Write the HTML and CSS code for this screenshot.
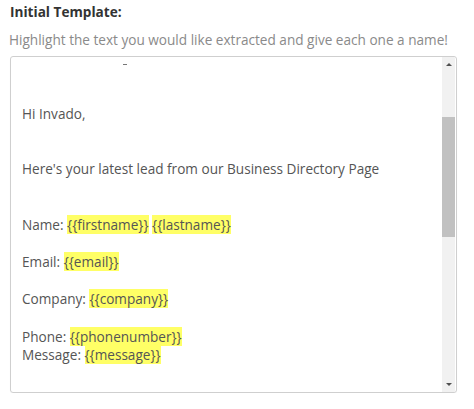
FILE: index.html
```html
<!DOCTYPE html>
<html>
<head>
<meta charset="utf-8">
<link rel="stylesheet" href="styles.css">
</head>
<body>
<div class="page">
  <h3 class="title">Initial Template:</h3>
  <p class="hint">Highlight the text you would like extracted and give each one a name!</p>
  <div class="box">
    <div class="content">
      <div class="top-gap"><span class="dash"></span></div>
      <div class="line">Hi Invado,</div>
      <div class="line"></div>
      <div class="line"></div>
      <div class="line">Here's your latest lead from our Business Directory Page</div>
      <div class="line"></div>
      <div class="line"></div>
      <div class="line">Name: <span class="hl">{{firstname}}</span> <span class="hl">{{lastname}}</span></div>
      <div class="line"></div>
      <div class="line">Email: <span class="hl">{{email}}</span></div>
      <div class="line"></div>
      <div class="line">Company: <span class="hl">{{company}}</span></div>
      <div class="line"></div>
      <div class="line">Phone: <span class="hl">{{phonenumber}}</span></div>
      <div class="line">Message: <span class="hl">{{message}}</span></div>
    </div>
    <div class="scrollbar">
      <div class="arrow up"></div>
      <div class="track"><div class="thumb"></div></div>
      <div class="arrow down"></div>
    </div>
  </div>
</div>
</body>
</html>
```
FILE: styles.css
```css
html, body {
  margin: 0;
  padding: 0;
  background: #ffffff;
}
body {
  font-family: "Open Sans", "Liberation Sans", sans-serif;
  font-size: 13.6px;
}
.page {
  padding: 2px 0 0 10px;
}
.title {
  margin: 0;
  font-size: 13.6px;
  font-weight: 700;
  line-height: 19px;
  color: #333333;
}
.hint {
  margin: 9px 0 7px -1px;
  font-size: 13.6px;
  line-height: 19px;
  color: #8a8a8a;
  white-space: nowrap;
}
.box {
  width: 445px;
  height: 335px;
  border: 1px solid #cfcfcf;
  border-radius: 3px;
  display: flex;
  overflow: hidden;
  box-shadow: 0 1px 1px rgba(0,0,0,0.04);
}
.content {
  flex: 1;
  padding-left: 11px;
  color: #555555;
  overflow: hidden;
}
.top-gap {
  height: 47.5px;
  padding-top: 7px;
  box-sizing: border-box;
}
.dash {
  display: block;
  width: 4px;
  height: 1px;
  background: #777777;
  margin-left: 101px;
}
.line {
  height: 18.6px;
  line-height: 18.6px;
  white-space: nowrap;
}
.hl {
  background: #ffff66;
}
.scrollbar {
  width: 13px;
  background: #f1f1f1;
  display: flex;
  flex-direction: column;
  margin-right: 1px;
}
.arrow {
  height: 15px;
  display: flex;
  align-items: center;
  justify-content: center;
}
.arrow::before {
  content: "";
  width: 0;
  height: 0;
  border-left: 3px solid transparent;
  border-right: 3px solid transparent;
}
.arrow.up::before {
  border-bottom: 3px solid #505050;
}
.arrow.down::before {
  border-top: 3px solid #505050;
}
.track {
  flex: 1;
}
.thumb {
  margin-top: 45px;
  height: 120px;
  background: #c1c1c1;
}
```
